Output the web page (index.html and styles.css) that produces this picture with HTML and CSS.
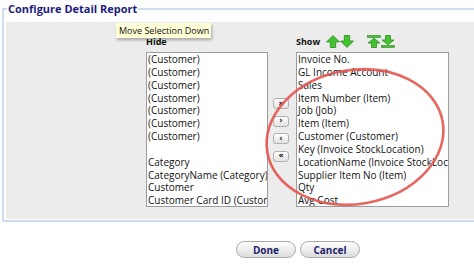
FILE: index.html
```html
<!DOCTYPE html>
<html lang="en">
<head>
	<title>Configure Detail Report</title>
	<link rel="stylesheet" href="styles.css">
</head>
<body>
	<div class="page">
		<fieldset class="report">
			<legend>Configure Detail Report</legend>
			<div class="panel">
				<div class="column hide-col">
					<div class="col-head">Hide</div>
					<ul class="list-box">
						<li>(Customer)</li>
						<li>(Customer)</li>
						<li>(Customer)</li>
						<li>(Customer)</li>
						<li>(Customer)</li>
						<li>(Customer)</li>
						<li>(Customer)</li>
						<li>&nbsp;</li>
						<li>Category</li>
						<li>CategoryName (Category)</li>
						<li>Customer</li>
						<li>Customer Card ID (Customer)</li>
					</ul>
				</div>
				<div class="move-col">
					<button class="move-btn"><span>&raquo;</span></button>
					<button class="move-btn"><span>&rsaquo;</span></button>
					<button class="move-btn"><span>&lsaquo;</span></button>
					<button class="move-btn"><span>&laquo;</span></button>
				</div>
				<div class="column show-col">
					<div class="col-head">
						Show
						<span class="arrows">
							<svg width="14" height="13" viewBox="0 0 14 13"><path d="M7 0.5 L13.5 7 L9.7 7 L9.7 12.5 L4.3 12.5 L4.3 7 L0.5 7 Z" fill="#45c232" stroke="#2b8d1f" stroke-width="0.8" stroke-linejoin="round"/></svg>
							<svg width="14" height="13" viewBox="0 0 14 13"><path d="M7 12.5 L13.5 6 L9.7 6 L9.7 0.5 L4.3 0.5 L4.3 6 L0.5 6 Z" fill="#45c232" stroke="#2b8d1f" stroke-width="0.8" stroke-linejoin="round"/></svg>
						</span>
						<span class="arrows">
							<svg width="14" height="13" viewBox="0 0 14 13"><rect x="0.5" y="0.5" width="13" height="2" fill="#45c232" stroke="#2b8d1f" stroke-width="0.6"/><path d="M7 3.2 L13 8 L9.5 8 L9.5 12.5 L4.5 12.5 L4.5 8 L1 8 Z" fill="#45c232" stroke="#2b8d1f" stroke-width="0.8" stroke-linejoin="round"/></svg>
							<svg width="14" height="13" viewBox="0 0 14 13"><path d="M7 9.8 L13 5 L9.5 5 L9.5 0.5 L4.5 0.5 L4.5 5 L1 5 Z" fill="#45c232" stroke="#2b8d1f" stroke-width="0.8" stroke-linejoin="round"/><rect x="0.5" y="10.5" width="13" height="2" fill="#45c232" stroke="#2b8d1f" stroke-width="0.6"/></svg>
						</span>
					</div>
					<ul class="list-box">
						<li>Invoice No.</li>
						<li>GL Income Account</li>
						<li>Sales</li>
						<li>Item Number (Item)</li>
						<li>Job (Job)</li>
						<li>Item (Item)</li>
						<li>Customer (Customer)</li>
						<li>Key (Invoice StockLocation)</li>
						<li>LocationName (Invoice StockLocation)</li>
						<li>Supplier Item No (Item)</li>
						<li>Qty</li>
						<li>Avg Cost</li>
					</ul>
				</div>
			</div>
		</fieldset>
		<div class="actions">
			<button class="pill">Done</button>
			<button class="pill">Cancel</button>
		</div>
	</div>

	<div class="tooltip">Move Selection Down</div>

	<svg class="circle" width="200" height="160" viewBox="0 0 200 160">
		<ellipse cx="100" cy="82" rx="89" ry="67" transform="rotate(-10 100 82)" fill="none" stroke="#e2574e" stroke-width="2.6" opacity="0.9"/>
	</svg>
</body>
</html>
```

FILE: styles.css
```css
* {
	margin: 0;
	padding: 0;
	box-sizing: border-box;
}

body {
	font-family: "Open Sans", "DejaVu Sans", sans-serif;
	color: #111;
	background: #fff;
	overflow: hidden;
	width: 474px;
	height: 278px;
	position: relative;
}

.page {
	width: 592px;
	margin-left: 2px;
}

.report {
	border: 2px solid #cfdcef;
	padding: 0 2px 1px 2px;
}

.report legend {
	font-size: 11px;
	font-weight: bold;
	color: #1c1c7c;
	line-height: 18px;
	padding: 0 1px;
	margin-left: 1px;
}

.panel {
	margin-top: 4px;
	height: 197px;
	background: #ececec;
	padding-left: 140px;
	display: flex;
}

.column {
	display: flex;
	flex-direction: column;
}

.col-head {
	height: 30px;
	display: flex;
	align-items: flex-end;
	padding-bottom: 5px;
	font-size: 9px;
	font-weight: bold;
	line-height: 10px;
}

.arrows {
	display: flex;
	margin-left: 6px;
	margin-bottom: -1px;
}

.arrows + .arrows {
	margin-left: 13px;
}

.hide-col {
	width: 122px;
}

.show-col {
	width: 153px;
	margin-left: 7px;
}

.list-box {
	list-style: none;
	height: 155px;
	background: #fff;
	border: 1px solid #9c9c9c;
	padding: 0 1px;
	overflow: hidden;
	font-size: 10px;
	line-height: 12.85px;
	white-space: nowrap;
}

.move-col {
	display: flex;
	flex-direction: column;
	margin-left: 5px;
	padding-top: 76px;
	gap: 6.5px;
}

.move-btn {
	width: 16px;
	height: 11px;
	border: 1px solid #b0b0b0;
	border-radius: 3px;
	background: linear-gradient(#ffffff, #e2e2e2);
	display: flex;
	align-items: center;
	justify-content: center;
	overflow: visible;
}

.move-btn span {
	font-family: "DejaVu Sans", sans-serif;
	font-size: 8px;
	font-weight: bold;
	line-height: 8px;
	color: #000;
}

.actions {
	display: flex;
	justify-content: center;
	gap: 4px;
	margin-top: 19px;
}

.pill {
	width: 60px;
	height: 17px;
	border: 1px solid #a9a9a9;
	border-radius: 9px;
	background: linear-gradient(#ffffff, #dcdcdc);
	font-family: "Open Sans", sans-serif;
	font-size: 10px;
	font-weight: bold;
	color: #1f1f6b;
	line-height: 14px;
}

.tooltip {
	position: absolute;
	left: 116px;
	top: 23px;
	width: 95px;
	height: 15px;
	background: #ffffd8;
	box-shadow: 1px 2px 3px rgba(0, 0, 0, 0.3);
	font-size: 9px;
	line-height: 15px;
	padding-left: 3px;
	color: #111;
}

.circle {
	position: absolute;
	left: 255px;
	top: 55px;
}
```
